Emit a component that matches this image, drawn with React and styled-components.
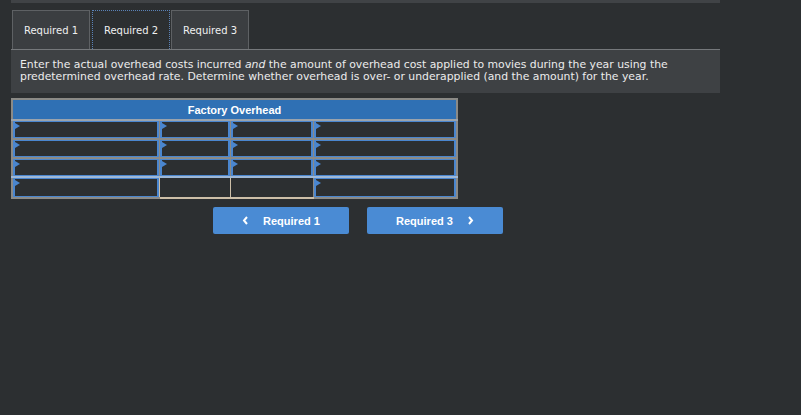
import React from "react";
import styled, { createGlobalStyle } from "styled-components";

const Global = createGlobalStyle`
  html, body { margin: 0; padding: 0; background: #2c2f31; }
  body { width: 801px; height: 415px; overflow: hidden; }
`;

const Page = styled.div`
  width: 709px;
  margin-left: 11px;
`;

const TopBar = styled.div`
  height: 3px;
  background: #404346;
`;

const Tabs = styled.div`
  display: flex;
  gap: 1px;
  margin-top: 7px;
  padding-left: 1px;
`;

const Tab = styled.div`
  box-sizing: border-box;
  width: ${(p) => p.$w}px;
  height: 39px;
  display: flex;
  align-items: center;
  justify-content: center;
  font-family: "DejaVu Sans", Verdana, sans-serif;
  font-size: 10px;
  color: #f0f0f0;
  background: ${(p) => (p.$active ? "#2c2f31" : "#3b3e41")};
  border: 1px ${(p) => (p.$active ? "dotted #5b83b8" : "solid #5e6164")};
  border-bottom: none;
  margin-left: ${(p) => p.$ml || 0}px;
`;

const Panel = styled.div`
  background: #3e4144;
  border-top: 1px solid #75787b;
  padding: 9px 9px 10px;
  font-family: "DejaVu Sans", Verdana, sans-serif;
  font-size: 10.85px;
  line-height: 12px;
  color: #ececec;
`;

const Table = styled.table`
  margin-top: 5px;
  border-collapse: collapse;
  width: 447px;
  border: 2px solid #8b8a86;
  table-layout: fixed;
`;

const HeadCell = styled.th`
  height: 19px;
  padding: 0;
  background: #2f70b4;
  color: #ffffff;
  font-family: "Liberation Sans", Arial, sans-serif;
  font-weight: bold;
  font-size: 11px;
  text-align: center;
  border-bottom: 2px solid #9aa3ad;
`;

const Cell = styled.td`
  box-sizing: border-box;
  padding: 0;
  height: ${(p) => p.$h}px;
  border-left: 1px solid ${(p) => (p.$tan ? "#cdbfa8" : "#8b8a86")};
  border-bottom: ${(p) => (p.$tan ? "2px solid #cdbfa8" : p.$lightBottom ? "2px solid #9fb8d6" : "2px solid #8b8a86")};
`;

const InputBox = styled.div`
  box-sizing: border-box;
  height: ${(p) => p.$h}px;
  border: 2px solid #4a86cf;
  border-top-width: 1px;
  border-bottom-width: 1px;
  background: #2c2f31;
  position: relative;
  &::before {
    content: "";
    position: absolute;
    left: 0;
    top: 1px;
    border-left: 5px solid #4a86cf;
    border-top: 3px solid transparent;
    border-bottom: 3px solid transparent;
  }
`;

const Buttons = styled.div`
  display: flex;
  gap: 18px;
  margin-top: 8px;
  padding-left: 202px;
`;

const NavButton = styled.button`
  box-sizing: border-box;
  width: 136px;
  height: 27px;
  border: none;
  border-radius: 2px;
  background: #4a8bd4;
  color: #ffffff;
  font-family: "Liberation Sans", Arial, sans-serif;
  font-weight: bold;
  font-size: 11px;
  display: flex;
  align-items: center;
  justify-content: center;
  gap: 14px;
  padding: 0;
`;

const Chevron = ({ dir }) => (
  <svg width="7" height="9" viewBox="0 0 7 9">
    <path
      d={dir === "left" ? "M5 1 L2 4.5 L5 8" : "M2 1 L5 4.5 L2 8"}
      stroke="#fff"
      strokeWidth="2"
      fill="none"
    />
  </svg>
);

const rows = [
  { cells: [true, true, true, true], h: 17 },
  { cells: [true, true, true, true], h: 17 },
  { cells: [true, true, true, true], h: 17, lightBottom: true },
  { cells: [true, false, false, true], h: 19 },
];

export default function App() {
  return (
    <>
      <Global />
      <Page>
        <TopBar />
        <Tabs>
          <Tab $w={78}>Required 1</Tab>
          <Tab $w={78} $active $ml={1}>Required 2</Tab>
          <Tab $w={78}>Required 3</Tab>
        </Tabs>
        <Panel>
          Enter the actual overhead costs incurred <i>and</i> the amount of overhead cost applied to movies during the year using the
          <br />
          predetermined overhead rate. Determine whether overhead is over- or underapplied (and the amount) for the year.
        </Panel>
        <Table>
          <colgroup>
            <col style={{ width: 147 }} />
            <col style={{ width: 71 }} />
            <col style={{ width: 83 }} />
            <col style={{ width: 144 }} />
          </colgroup>
          <thead>
            <tr>
              <HeadCell colSpan={4}>Factory Overhead</HeadCell>
            </tr>
          </thead>
          <tbody>
            {rows.map((r, i) => (
              <tr key={i}>
                {r.cells.map((input, j) => (
                  <Cell key={j} $h={r.h} $tan={!input} $lightBottom={r.lightBottom}>
                    {input && <InputBox $h={r.h} />}
                  </Cell>
                ))}
              </tr>
            ))}
          </tbody>
        </Table>
        <Buttons>
          <NavButton>
            <Chevron dir="left" />
            Required 1
          </NavButton>
          <NavButton>
            Required 3
            <Chevron dir="right" />
          </NavButton>
        </Buttons>
      </Page>
    </>
  );
}
